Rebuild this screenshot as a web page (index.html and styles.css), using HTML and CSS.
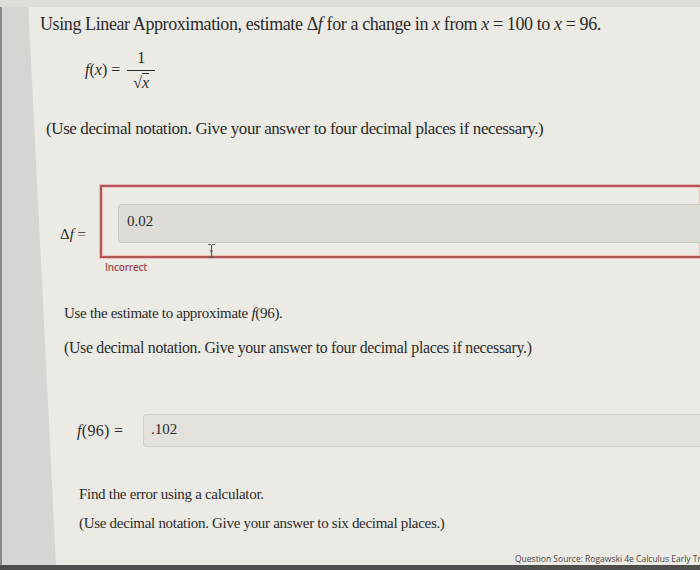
FILE: index.html
```html
<!DOCTYPE html>
<html>
<head>
<meta charset="utf-8">
<link rel="stylesheet" href="styles.css">
</head>
<body>
<div class="bezel"></div>
<div class="page">
  <div class="topband"></div>
  <p class="title">Using Linear Approximation, estimate <span class="up">Δ</span><i>f</i> for a change in <i>x</i> from <i>x</i> = 100 to <i>x</i> = 96.</p>
  <div class="formula">
    <span><i>f</i>(<i>x</i>) =</span>
    <span class="frac"><span class="num">1</span><span class="den">√<span class="ol"><i>x</i></span></span></span>
  </div>
  <p class="note note1">(Use decimal notation. Give your answer to four decimal places if necessary.)</p>

  <div class="ans1">
    <span class="lab1"><span class="up">Δ</span><i>f</i> =</span>
    <div class="redbox">
      <div class="input1">0.02</div>
      <svg class="ibeam" width="9" height="16" viewBox="0 0 9 16"><path d="M1 1.5h3M5 1.5h3M4.5 2v12M1 14.5h3M5 14.5h3M3 8h3" stroke="#5f5d58" stroke-width="1.2" fill="none"/></svg>
    </div>
  </div>
  <div class="incorrect">Incorrect</div>

  <div class="sec2">
    <p class="q2">Use the estimate to approximate <i>f</i>(96).</p>
    <p class="note note2">(Use decimal notation. Give your answer to four decimal places if necessary.)</p>
  </div>

  <div class="ans2">
    <span class="lab2"><i>f</i>(96) =</span>
    <div class="input2">.102</div>
  </div>

  <div class="sec3">
    <p class="q3">Find the error using a calculator.</p>
    <p class="note note3">(Use decimal notation. Give your answer to six decimal places.)</p>
  </div>

  <div class="sourcewrap"><div class="source">Question Source: Rogawski 4e Calculus Early Tra</div></div>
</div>
<div class="bottombar"></div>
</body>
</html>
```

FILE: styles.css
```css
html, body {
  margin: 0;
  padding: 0;
}
body {
  width: 700px;
  height: 570px;
  overflow: hidden;
  background: #ebeae5;
  font-family: "Liberation Serif", "Times New Roman", serif;
  color: #2b2a2a;
  display: flex;
  flex-direction: column;
  position: relative;
}
.bezel {
  position: absolute;
  left: 0;
  top: 0;
  width: 60px;
  height: 565px;
  background: #d6d5d1;
  clip-path: polygon(0 0, 28px 0, 56px 100%, 0 100%);
  border-left: 2px solid #8a8985;
  box-sizing: border-box;
}
.page {
  flex: 1;
  display: flex;
  flex-direction: column;
  position: relative;
}
.topband {
  height: 7px;
  background: #dfddd8;
}
p { margin: 0; }
.up { font-style: normal; }
i { font-style: italic; }

.title {
  margin: 5px 0 0 40px;
  font-size: 18px;
  letter-spacing: -0.4px;
  line-height: 24px;
}
.formula {
  margin: 13px 0 0 85px;
  display: flex;
  align-items: center;
  gap: 7px;
  font-size: 16px;
}
.frac {
  display: inline-flex;
  flex-direction: column;
  align-items: center;
  line-height: 17px;
}
.num {
  border-bottom: 1px solid #2b2a2a;
  padding: 0 4px 4px;
  width: 20px;
  text-align: center;
}
.den {
  padding-top: 3px;
}
.ol {
  border-top: 1px solid #2b2a2a;
}
.note {
  letter-spacing: -0.3px;
}
.note1 {
  margin: 28px 0 0 46px;
  font-size: 17px;
  letter-spacing: -0.4px;
}

.ans1 {
  margin: 46px 0 0 60px;
  display: flex;
  align-items: flex-start;
}
.lab1 {
  width: 40px;
  font-size: 15px;
  padding-top: 41px;
}
.redbox {
  flex: 1;
  height: 73px;
  border: 2px solid #b1565b;
  border-right: none;
  box-shadow: 0 0 0 1px #eeb9b8, inset 0 0 0 1px #f0c3c1;
  padding: 17px 0 0 16px;
  box-sizing: border-box;
  position: relative;
}
.input1 {
  height: 39px;
  background: #dddcd7;
  border: 1px solid #c9c8c3;
  border-right: none;
  border-radius: 4px 0 0 4px;
  box-sizing: border-box;
  font-size: 15px;
  padding: 8px 0 0 8px;
}
.ibeam {
  position: absolute;
  left: 105px;
  top: 56px;
}
.incorrect {
  margin: 2px 0 0 105px;
  font-family: "Open Sans", "Liberation Sans", sans-serif;
  font-size: 10px;
  font-weight: 600;
  color: #a54b4f;
  letter-spacing: -0.2px;
}

.sec2 {
  margin: 31px 0 0 64px;
}
.q2 {
  font-size: 15px;
  letter-spacing: -0.3px;
}
.note2 {
  margin-top: 17px;
  font-size: 15.8px;
}

.ans2 {
  margin: 57px 0 0 77px;
  display: flex;
  align-items: center;
}
.lab2 {
  width: 66px;
  font-size: 16px;
  letter-spacing: 0.3px;
}
.input2 {
  flex: 1;
  height: 33px;
  background: #e2e1dc;
  border: 1px solid #cfcec8;
  border-right: none;
  border-radius: 4px 0 0 4px;
  box-sizing: border-box;
  font-size: 15px;
  padding: 6px 0 0 7px;
}

.sec3 {
  margin: 39px 0 0 79px;
}
.q3 {
  font-size: 15px;
  letter-spacing: -0.3px;
}
.note3 {
  margin-top: 12px;
  font-size: 15px;
}

.sourcewrap {
  margin: auto 0 0 0;
  padding-left: 515px;
  overflow: hidden;
}
.source {
  white-space: nowrap;
  font-family: "Open Sans", "Liberation Sans", sans-serif;
  font-size: 8.5px;
  color: #4a4946;
  line-height: 12px;
}
.bottombar {
  height: 5px;
  background: #4f4e4c;
  position: relative;
}
```
